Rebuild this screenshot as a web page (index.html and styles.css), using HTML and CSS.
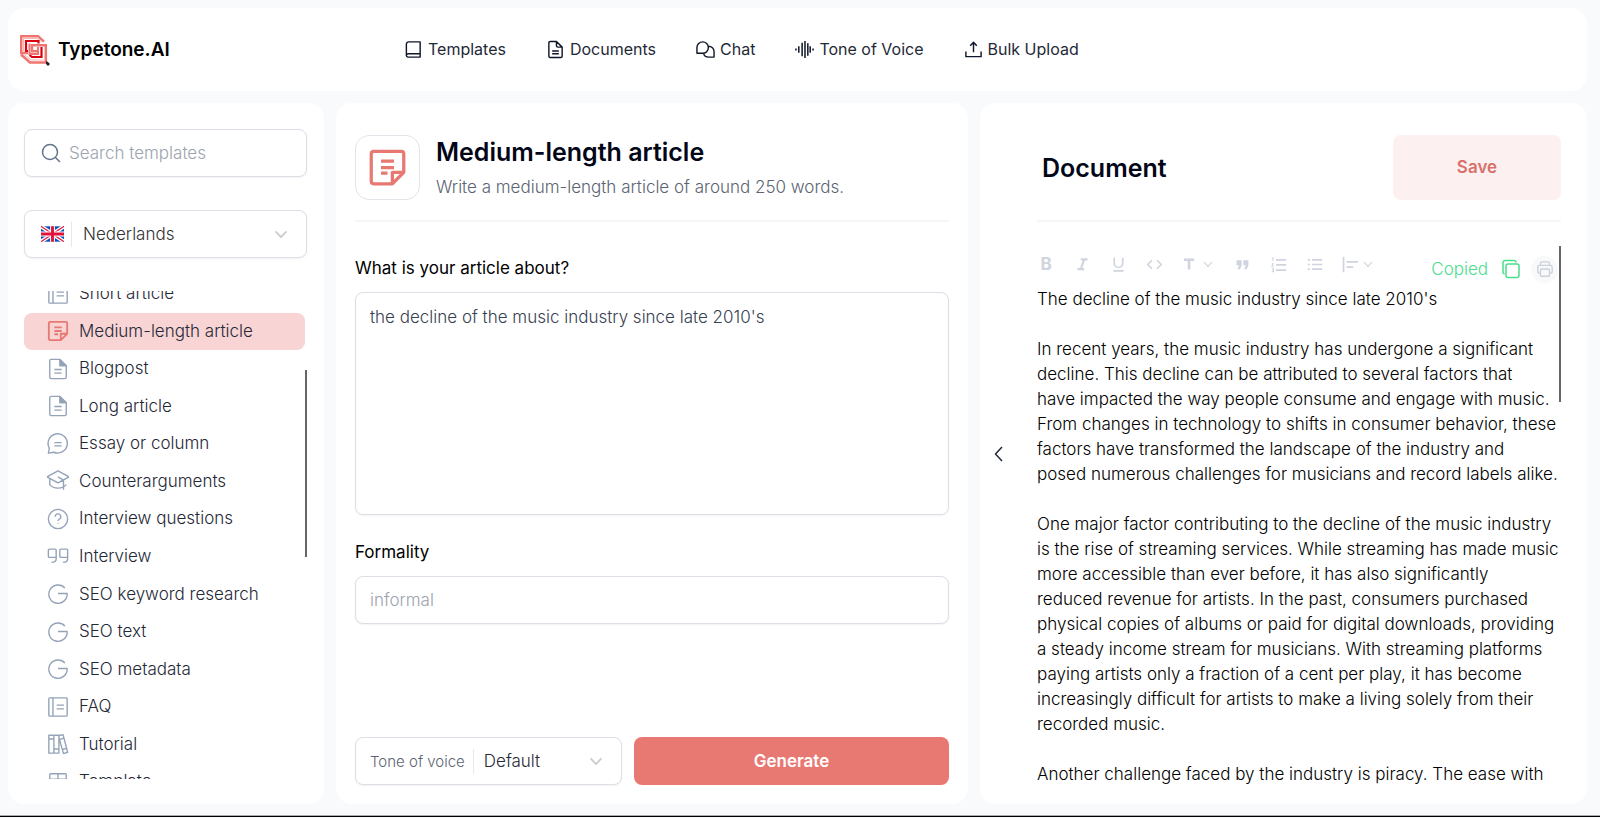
FILE: index.html
```html
<!DOCTYPE html>
<html lang="en">

<head>
    <meta charset="utf-8" />
    <title>Typetone.AI</title>
    <link rel="stylesheet" href="styles.css">
</head>

<body>

<!-- icons shared by the page -->
<svg class="sprite" aria-hidden="true">
    <symbol id="i-book" viewBox="0 0 20 20"><path d="M17 14.500V2H5a2.500 2.500 0 0 0-2.500 2.500v11A2 2 0 0 0 4.500 18H17v-3.500M17 14.500H4.500a2 2 0 0 0-2 1.500"/></symbol>
    <symbol id="i-doc" viewBox="0 0 20 20"><path d="M11 1.500H4.500a1.500 1.500 0 0 0-1.500 1.500v14a1.500 1.500 0 0 0 1.500 1.500h11a1.500 1.500 0 0 0 1.500-1.500V7.500zM11 1.500v4.500a1.500 1.500 0 0 0 1.500 1.500H17M6.500 11.500h7M6.500 14.500h7"/></symbol>
    <symbol id="i-chat" viewBox="0 0 20 20"><path d="M1 14V8a6 6 0 1 1 6 6zM13 6.500c3.500 0 6 2.500 6 5.500v6h-5.500c-2.500 0-5-1.500-5.500-4"/></symbol>
    <symbol id="i-wave" viewBox="0 0 20 20"><path stroke-width="1.6" d="M1 9v2M4 6.500v7M7.500 3v14M10.500 1v18M13.500 3.500v13M16 6.500v7M19 9v2"/></symbol>
    <symbol id="i-upload" viewBox="0 0 20 20"><path d="M2 12v5.500h16V12M10 13V2.500M6.500 6L10 2.500 13.500 6"/></symbol>
    <symbol id="i-note" viewBox="0 0 24 24"><path d="M15 22H3.500A1.500 1.500 0 0 1 2 20.500v-17A1.500 1.500 0 0 1 3.500 2h17A1.500 1.500 0 0 1 22 3.500V15zM15 22v-7h7M8 8h8M8 12h8M8 15.500h4"/></symbol>
    <symbol id="i-page" viewBox="0 0 24 24"><path d="M14 1.500H4.500a1.500 1.500 0 0 0-1.500 1.500v18a1.500 1.500 0 0 0 1.500 1.500h15a1.500 1.500 0 0 0 1.500-1.500V8.500zM8 12.500h8M8 16.500h8"/><path fill="currentColor" d="M14 1.500v7h7z"/></symbol>
    <symbol id="i-bubble" viewBox="0 0 24 24"><path d="M1.500 22l1-5.500A10.500 10.500 0 1 1 7.500 21zM8 10.500h8M8 14h8"/></symbol>
    <symbol id="i-cap" viewBox="0 0 24 24"><path d="M0 7.500L12 1l12 6.500L12 14zM3 10v6c4 5 14 5 18 0M12 7.500l6 3.500v10.500"/></symbol>
    <symbol id="i-help" viewBox="0 0 24 24"><circle cx="12" cy="12" r="10.500"/><path d="M9 9.500a3 3 0 1 1 4.500 2.500c-1 .6-1.500 1.200-1.500 2.200M12 16.500v1"/></symbol>
    <symbol id="i-quote" viewBox="0 0 24 24"><path d="M10 13.500H2.500A1 1 0 0 1 1.500 12.500v-7a1 1 0 0 1 1-1h6.500a1 1 0 0 1 1 1V15c0 2.500-2 4-5 4M22.500 13.500H15a1 1 0 0 1-1-1v-7a1 1 0 0 1 1-1h6.500a1 1 0 0 1 1 1V15c0 2.500-2 4-5 4"/></symbol>
    <symbol id="i-g" viewBox="0 0 24 24"><path d="M19.500 5.500A10 10 0 1 0 22 11.500H12"/></symbol>
    <symbol id="i-news" viewBox="0 0 24 24"><rect x="2" y="2" width="20" height="20" rx="1"/><path d="M6.500 2v20M10.500 10h8M10.500 14h8"/></symbol>
    <symbol id="i-books" viewBox="0 0 24 24"><path d="M2 2.500h5.500V22H2zM7.500 2.500H13V22H7.500zM2 6.500h5.500M7.500 17.500H13M13 3l4.500-1.200L22.500 21 18 22.500 13 5M14 7l4.500-1.500M17 18l5-1.500"/></symbol>
    <symbol id="i-table" viewBox="0 0 24 24"><rect x="3" y="3" width="18" height="18" rx="1"/><path d="M12 3v18M3 9h18"/></symbol>
    <symbol id="i-down" viewBox="0 0 20 20"><path d="M4 7l6 6.500L16 7"/></symbol>
    <symbol id="i-search" viewBox="0 0 20 20"><circle cx="9" cy="9" r="7.500"/><path d="M14.500 14.500L19 19"/></symbol>
</svg>

<div class="app">

    <header class="topbar">
        <a class="brand" href="#">
            <svg class="brand-logo" viewBox="0 0 30 32" aria-hidden="true">
                <g fill="none">
                    <path stroke="#f07570" stroke-width="2.500" d="M8 19H1.200V2.200H18l6 5.500"/>
                    <path stroke="#f07570" stroke-width="2.500" d="M1 20.500l9 8h15.800V11.200H12v6h6"/>
                    <path stroke="#fbb6b2" d="M3.500 17V4.500H17l4 3M5 21l6 5h12.500"/>
                    <path stroke="#d9040f" stroke-width="2.200" d="M8 17H6V7h12.500v2.500M21.500 13v10H12l-2.500-2"/>
                    <path stroke="#f07570" stroke-width="2" d="M9.500 9.500v10.500H18v-7"/>
                </g>
                <path fill="#222" d="M26 27l2 1 2 2-2 2-2-2z"/>
            </svg>
            Typetone.AI
        </a>
        <nav class="menu">
            <a href="#"><svg class="icon"><use href="#i-book"/></svg>Templates</a>
            <a href="#"><svg class="icon"><use href="#i-doc"/></svg>Documents</a>
            <a href="#"><svg class="icon"><use href="#i-chat"/></svg>Chat</a>
            <a href="#"><svg class="icon"><use href="#i-wave"/></svg>Tone of Voice</a>
            <a href="#"><svg class="icon"><use href="#i-upload"/></svg>Bulk Upload</a>
        </nav>
    </header>

    <main class="columns">

        <aside class="panel sidebar">
            <label class="field">
                <svg class="icon search-icon"><use href="#i-search"/></svg>
                <input type="search" placeholder="Search templates" aria-label="Search templates">
            </label>

            <div class="field language">
                <svg class="flag" viewBox="0 0 24 16" aria-hidden="true">
                    <rect width="24" height="16" fill="#0b50b5"/>
                    <path d="M0 0l24 16M24 0L0 16" stroke="#fff" stroke-width="4"/>
                    <path d="M0 0l24 16M24 0L0 16" stroke="#e0123a" stroke-width="1.3"/>
                    <path d="M12 0v16M0 8h24" stroke="#fff" stroke-width="5"/>
                    <path d="M12 0v16M0 8h24" stroke="#e0123a" stroke-width="3"/>
                </svg>
                <select aria-label="Language">
                    <option>Nederlands</option>
                </select>
                <svg class="icon arrow"><use href="#i-down"/></svg>
            </div>

            <div class="templates">
                <ul>
                    <li><a href="#"><svg class="icon"><use href="#i-news"/></svg>Short article</a></li>
                    <li><a class="active" href="#"><svg class="icon"><use href="#i-note"/></svg>Medium-length article</a></li>
                    <li><a href="#"><svg class="icon"><use href="#i-page"/></svg>Blogpost</a></li>
                    <li><a href="#"><svg class="icon"><use href="#i-page"/></svg>Long article</a></li>
                    <li><a href="#"><svg class="icon"><use href="#i-bubble"/></svg>Essay or column</a></li>
                    <li><a href="#"><svg class="icon"><use href="#i-cap"/></svg>Counterarguments</a></li>
                    <li><a href="#"><svg class="icon"><use href="#i-help"/></svg>Interview questions</a></li>
                    <li><a href="#"><svg class="icon"><use href="#i-quote"/></svg>Interview</a></li>
                    <li><a href="#"><svg class="icon"><use href="#i-g"/></svg>SEO keyword research</a></li>
                    <li><a href="#"><svg class="icon"><use href="#i-g"/></svg>SEO text</a></li>
                    <li><a href="#"><svg class="icon"><use href="#i-g"/></svg>SEO metadata</a></li>
                    <li><a href="#"><svg class="icon"><use href="#i-news"/></svg>FAQ</a></li>
                    <li><a href="#"><svg class="icon"><use href="#i-books"/></svg>Tutorial</a></li>
                    <li><a href="#"><svg class="icon"><use href="#i-table"/></svg>Template</a></li>
                </ul>
                <span class="thumb"></span>
            </div>
        </aside>

        <form class="panel editor">
            <div class="head">
                <span class="tile"><svg class="icon"><use href="#i-note"/></svg></span>
                <div class="intro">
                    <h1>Medium-length article</h1>
                    <p>Write a medium-length article of around 250 words.</p>
                </div>
            </div>

            <label class="caption" for="about">What is your article about?</label>
            <textarea class="field" id="about">the decline of the music industry since late 2010's</textarea>

            <label class="caption" for="formality">Formality</label>
            <input class="field" id="formality" type="text" placeholder="informal">

            <div class="actions">
                <div class="field tone">
                    <label for="tone">Tone of voice</label>
                    <select id="tone">
                        <option>Default</option>
                    </select>
                    <svg class="icon arrow"><use href="#i-down"/></svg>
                </div>
                <button class="generate" type="button">Generate</button>
            </div>
        </form>

        <section class="panel output">
            <button class="collapse" type="button" aria-label="Collapse">
                <svg class="icon" viewBox="0 0 20 20"><path d="M13 3l-6.500 7 6.500 7"/></svg>
            </button>

            <div class="document">
                <div class="head">
                    <h2>Document</h2>
                    <button class="save" type="button">Save</button>
                </div>

                <div class="sheet">
                    <div class="toolbar">
                        <div class="tools">
                            <button type="button" aria-label="Bold"><b>B</b></button>
                            <button type="button" aria-label="Italic"><svg class="icon" viewBox="0 0 20 20"><path stroke-width="2.5" d="M8 4h8M4 15.500h8M12 4L8 15.500"/></svg></button>
                            <button type="button" aria-label="Underline"><svg class="icon" viewBox="0 0 20 20"><path stroke-width="2" d="M5 2v6.500a5 5 0 0 0 10 0V2M4 17.500h12"/></svg></button>
                            <button type="button" aria-label="Code"><svg class="icon" viewBox="0 0 20 20"><path stroke-width="2" d="M7 5l-5 5 5 5M13 5l5 5-5 5"/></svg></button>
                            <button class="wide" type="button" aria-label="Text style"><svg class="icon" viewBox="0 0 20 20"><path stroke-width="3" d="M3.500 4.500h12M9.500 4.500V16"/></svg><svg class="icon mini"><use href="#i-down"/></svg></button>
                            <button type="button" aria-label="Quote"><svg class="icon" viewBox="0 0 20 20"><path fill="currentColor" stroke="none" d="M3 5h6v6l-2 4.500H4L6 11H3zM11 5h6v6l-2 4.500h-3l2-4.500h-3z"/></svg></button>
                            <button type="button" aria-label="Numbered list"><svg class="icon" viewBox="0 0 20 20"><path stroke-width="2" d="M7 4.500h12M7 10.500h12M7 16.500h12"/><path stroke-width="1.2" d="M2 2h1.500v4M2 9h2l-2 3h2M2 14.500h2v4H2M2.500 16.500H4"/></svg></button>
                            <button type="button" aria-label="Bulleted list"><svg class="icon" viewBox="0 0 20 20"><path stroke-width="2" d="M7 4.500h12M7 10h12M7 15.500h12M2 4.500h2.500M2 10h2.500M2 15.500h2.500"/></svg></button>
                            <button class="wide" type="button" aria-label="Align"><svg class="icon" viewBox="0 0 20 20"><path stroke-width="2" d="M3 1v18M6.500 7H20M6.500 13h8"/></svg><svg class="icon mini"><use href="#i-down"/></svg></button>
                        </div>
                        <div class="share">
                            <span>Copied</span>
                            <button type="button" aria-label="Copy"><svg class="icon" viewBox="0 0 20 20"><rect x="5" y="5" width="13" height="13.500" rx="2"/><path d="M3.500 15A2 2 0 0 1 2 13V3.500a2 2 0 0 1 2-2h9A2 2 0 0 1 15 3.500"/></svg></button>
                            <button class="print" type="button" aria-label="Print"><svg class="icon" viewBox="0 0 20 20"><path d="M5 14.500H3.500A1.500 1.500 0 0 1 2 13V8a2 2 0 0 1 2-2h12a2 2 0 0 1 2 2v5a1.500 1.500 0 0 1-1.500 1.500H15M5 6V3.500A1.500 1.500 0 0 1 6.500 2h7A1.500 1.500 0 0 1 15 3.500V6"/><rect x="5" y="10" width="10" height="8" rx="1"/></svg></button>
                        </div>
                    </div>

                    <article class="text" contenteditable="true" spellcheck="false">
                        <p>The decline of the music industry since late 2010's</p>
                        <p>In recent years, the music industry has undergone a significant decline. This decline can be attributed to several factors that<br>have impacted the way people consume and engage with music. From changes in technology to shifts in consumer behavior, these factors have transformed the landscape of the industry and<br>posed numerous challenges for musicians and record labels alike.</p>
                        <p>One major factor contributing to the decline of the music industry is the rise of streaming services. While streaming has made music more accessible than ever before, it has also significantly<br>reduced revenue for artists. In the past, consumers purchased physical copies of albums or paid for digital downloads, providing a steady income stream for musicians. With streaming platforms paying artists only a fraction of a cent per play, it has become increasingly difficult for artists to make a living solely from their recorded music.</p>
                        <p>Another challenge faced by the industry is piracy. The ease with</p>
                    </article>
                    <span class="thumb"></span>
                </div>
            </div>
        </section>

    </main>
</div>

</body>
</html>
```
FILE: styles.css
```css
* {
    box-sizing: border-box;
}

body {
    margin: 0;
    background: #f8fafc;
    color: #1f2937;
    font-family: Inter, "Liberation Sans", sans-serif;
    font-size: 17px;
    font-weight: 300;
    line-height: 25px;
}

h1, h2, p, ul {
    margin: 0;
    padding: 0;
}

ul {
    list-style: none;
}

a {
    color: inherit;
    text-decoration: none;
}

button, input, select, textarea {
    font: inherit;
    color: inherit;
}

button {
    border: 0;
    padding: 0;
    background: none;
}

.sprite {
    display: none;
}

.icon {
    flex: none;
    width: 20px;
    height: 20px;
    fill: none;
    stroke: currentColor;
    stroke-width: 1.5;
    stroke-linejoin: round;
}

.app {
    display: flex;
    flex-direction: column;
    gap: 12px;
    height: calc(100vh - 1px);
    padding: 8px 13px 12px 8px;
    border-bottom: 1px solid #000;
    box-shadow: inset 0 -1px #a9abae;
}

/* header */

.topbar {
    display: grid;
    grid-template-columns: 384px 1fr;
    align-items: center;
    flex: none;
    height: 83px;
    padding: 0 12px;
    border-radius: 16px;
    background: white;
}

.brand {
    display: flex;
    align-items: center;
    gap: 8px;
    color: black;
    font-size: 19px;
    font-weight: 600;
}

.brand-logo {
    width: 30px;
    height: 32px;
}

.menu {
    display: flex;
    gap: 40px;
    font-size: 16px;
    font-weight: 400;
}

.menu a {
    display: flex;
    align-items: center;
    gap: 5px;
}

.menu .icon {
    width: 19px;
    height: 19px;
    color: #0f172a;
}

/* columns */

.columns {
    display: grid;
    grid-template-columns: 316fr 632fr 607fr;
    gap: 12px;
    flex: 1;
    min-height: 0;
}

.panel {
    display: flex;
    min-width: 0;
    min-height: 0;
    border-radius: 16px;
    background: white;
}

.field {
    display: flex;
    align-items: center;
    flex: none;
    height: 48px;
    border: 1px solid #dcdfe6;
    border-radius: 8px;
    background: white;
    box-shadow: 0 1px 2px rgba(0, 0, 0, 0.05);
}

.field input, .field select {
    flex: 1;
    min-width: 0;
    padding: 0;
    border: 0;
    outline: 0;
    background: none;
    appearance: none;
}

::placeholder {
    color: #9ca3af;
    opacity: 1;
}

.arrow {
    width: 18px;
    height: 18px;
    margin-right: 16px;
    color: #ccc;
    stroke-width: 2;
    pointer-events: none;
}

.thumb {
    position: absolute;
    right: 0;
    width: 2px;
    background: #666;
}

/* sidebar */

.sidebar {
    flex-direction: column;
    padding: 26px 17px 25px 16px;
}

.sidebar .field {
    margin-bottom: 33px;
    padding-left: 16px;
}

.search-icon {
    margin-right: 8px;
    color: #64748b;
}

.language {
    color: #333;
}

.flag {
    width: 23px;
    height: 16px;
    margin-right: 7px;
}

.language select {
    height: 25px;
    padding-left: 11px;
    border-left: 1px solid #e8e8ec;
}

.templates {
    position: relative;
    flex: 1;
    min-height: 0;
    overflow: hidden;
}

/* the list is scrolled a little: the first and last rows are cut */
.templates ul {
    display: grid;
    grid-auto-rows: calc(100% / 13);
    height: 100%;
    margin: -16px 2px 0 0;
}

.templates a {
    display: flex;
    align-items: center;
    gap: 9px;
    height: 100%;
    padding-left: 22px;
    border-radius: 8px;
}

.templates .icon {
    width: 24px;
    height: 24px;
    padding: 1px;
    color: #94a3b8;
}

.templates .active {
    background: #f9d4d4;
}

.templates .active .icon {
    color: #e87872;
    stroke-width: 2;
}

.templates .thumb {
    top: 79px;
    height: 187px;
}

/* form */

.head {
    display: flex;
    align-items: center;
    flex: none;
    height: 87px;
    padding-bottom: 20px;
    border-bottom: 2px solid #f5f6f8;
}

h1, h2 {
    color: #020617;
    font-size: 25px;
    font-weight: 600;
    line-height: 36px;
}

.editor {
    flex-direction: column;
    padding: 32px 19px 19px;
}

.tile {
    display: flex;
    align-items: center;
    justify-content: center;
    width: 65px;
    height: 65px;
    margin-right: 16px;
    border: 1px solid #e2e4ea;
    border-radius: 14px;
    color: #e87872;
}

.tile .icon {
    width: 39px;
    height: 39px;
    stroke-width: 2;
}

.intro {
    padding-top: 3px;
}

.intro p {
    color: #5b6472;
    line-height: 34px;
}

.caption {
    margin: 34px 0 11px;
    color: black;
    font-weight: 400;
}

.caption + .field {
    padding: 0 14px;
    outline: 0;
}

.caption + textarea.field {
    height: 223px;
    padding: 12px 14px;
    color: #374151;
    resize: none;
}

#about + .caption {
    margin: 25px 0 11px;
}

.actions {
    display: grid;
    grid-template-columns: 267fr 315fr;
    gap: 12px;
    margin-top: auto;
}

.tone label {
    padding: 0 8px 0 14px;
    color: #5b6472;
    font-size: 15px;
}

.tone select {
    height: 25px;
    padding-left: 10px;
    border-left: 1px solid #e8e8ec;
}

.generate {
    border-radius: 8px;
    background: #e87872;
    color: white;
    font-weight: 600;
}

/* document */

.collapse {
    display: flex;
    align-items: center;
    justify-content: center;
    flex: none;
    width: 57px;
    padding-right: 19px;
}

.document {
    display: flex;
    flex-direction: column;
    flex: 1;
    min-width: 0;
    padding: 32px 26px 18px 0;
}

.document .head {
    justify-content: space-between;
    padding-left: 5px;
}

.save {
    width: 168px;
    height: 65px;
    border-radius: 8px;
    background: #fdf0f0;
    color: #d9706c;
    font-weight: 600;
}

.sheet {
    position: relative;
    flex: 1;
    min-height: 0;
    margin-top: 24px;
    overflow: hidden;
}

.toolbar {
    display: flex;
    justify-content: space-between;
    height: 41px;
}

.tools {
    display: flex;
    height: 36px;
    gap: 18px;
    color: #cfd4de;
}

.tools button {
    display: flex;
    align-items: center;
    justify-content: center;
    width: 18px;
}

.tools b {
    font-weight: 700;
}

.tools .wide {
    width: 34px;
}

.tools .icon {
    width: 17px;
    height: 17px;
}

.tools .mini {
    width: 14px;
    height: 14px;
    margin-left: 3px;
}

.share {
    display: flex;
    align-items: center;
    gap: 13px;
    height: 46px;
    padding-right: 3px;
    color: #4ade8c;
}

.share button {
    display: flex;
}

.share .print {
    align-items: center;
    justify-content: center;
    width: 27px;
    height: 27px;
    margin-left: -3px;
    border-radius: 50%;
    background: #f8f9fb;
    color: #cbd0da;
}

.share .print .icon {
    width: 18px;
    height: 18px;
}

.text {
    color: black;
    outline: 0;
}

.text p + p {
    margin-top: 25px;
}

.sheet .thumb {
    top: 0;
    height: 156px;
}
```
